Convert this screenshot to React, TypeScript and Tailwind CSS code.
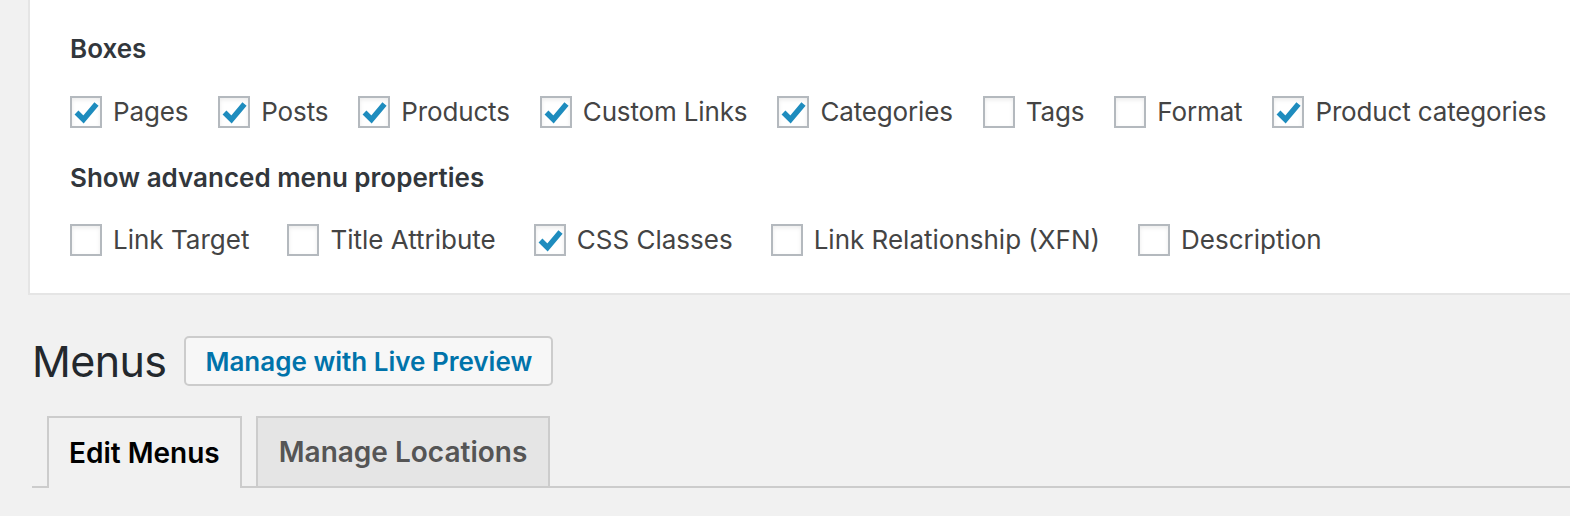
import React from "react"

const BOXES = [
  { label: "Pages", checked: true },
  { label: "Posts", checked: true },
  { label: "Products", checked: true },
  { label: "Custom Links", checked: true },
  { label: "Categories", checked: true },
  { label: "Tags", checked: false },
  { label: "Format", checked: false },
  { label: "Product categories", checked: true },
]

const ADVANCED = [
  { label: "Link Target", checked: false },
  { label: "Title Attribute", checked: false },
  { label: "CSS Classes", checked: true },
  { label: "Link Relationship (XFN)", checked: false },
  { label: "Description", checked: false },
]

function Checkbox({ label, checked, wide }: { label: string; checked: boolean; wide?: boolean }) {
  return (
    <label className={`flex items-center gap-[11px] h-[32px] ${wide ? "mr-[38px]" : "mr-[30px]"}`}>
      <span className="relative size-[32px] shrink-0 border-2 border-[#b4b9be] bg-white shadow-[inset_0_2px_4px_rgba(0,0,0,0.08)]">
        {checked && (
          <svg viewBox="0 0 32 32" className="absolute -left-[2px] -top-[2px] size-[32px]">
            <path d="M6.5 16.5 L13.5 23.5 L26.5 8" fill="none" stroke="#1e8cbe" strokeWidth="5.5" strokeLinejoin="miter" />
          </svg>
        )}
      </span>
      <span
        className={`text-[26px] leading-none text-[#444] whitespace-nowrap ${wide ? "tracking-normal" : "tracking-[-0.15px]"}`}
      >
        {label}
      </span>
    </label>
  )
}

export default function App() {
  return (
    <div
      className="w-[1570px] h-[516px] overflow-hidden bg-[#f1f1f1]"
      style={{ fontFamily: "Inter, 'Liberation Sans', sans-serif" }}
    >
      <div className="ml-[28px] bg-white border-l-2 border-b-2 border-[#e5e5e5] pl-[40px] pt-[31px] pb-[37px]">
        <h5 className="h-[34px] flex items-center text-[26px] font-semibold text-[#32373c]">Boxes</h5>
        <div className="mt-[31px] flex">
          {BOXES.map((b) => (
            <Checkbox key={b.label} {...b} />
          ))}
        </div>
        <h5 className="mt-[32px] h-[34px] flex items-center text-[26px] font-semibold text-[#32373c]">
          Show advanced menu properties
        </h5>
        <div className="mt-[30px] flex">
          {ADVANCED.map((b) => (
            <Checkbox key={b.label} {...b} wide />
          ))}
        </div>
      </div>

      <div className="ml-[32px] mt-[41px] flex items-center h-[50px]">
        <h1 className="text-[43px] font-normal text-[#23282d] tracking-[-0.6px]">Menus</h1>
        <button className="ml-[18px] h-[50px] px-[19px] rounded-[5px] border-2 border-[#ccc] bg-[#f7f7f7] text-[26px] font-semibold text-[#0073aa]">
          Manage with Live Preview
        </button>
      </div>

      <div className="ml-[32px] mt-[30px] flex border-b-2 border-[#ccc] pl-[15px]">
        <div className="-mb-[2px] h-[72px] px-[20px] flex items-center border-2 border-b-0 border-[#ccc] bg-[#f1f1f1] text-[28px] font-semibold text-black">
          Edit Menus
        </div>
        <div className="ml-[14px] -mb-[2px] h-[72px] px-[21px] flex items-center border-2 border-[#ccc] bg-[#e5e5e5] text-[28px] font-semibold text-[#555]">
          Manage Locations
        </div>
      </div>
    </div>
  )
}
